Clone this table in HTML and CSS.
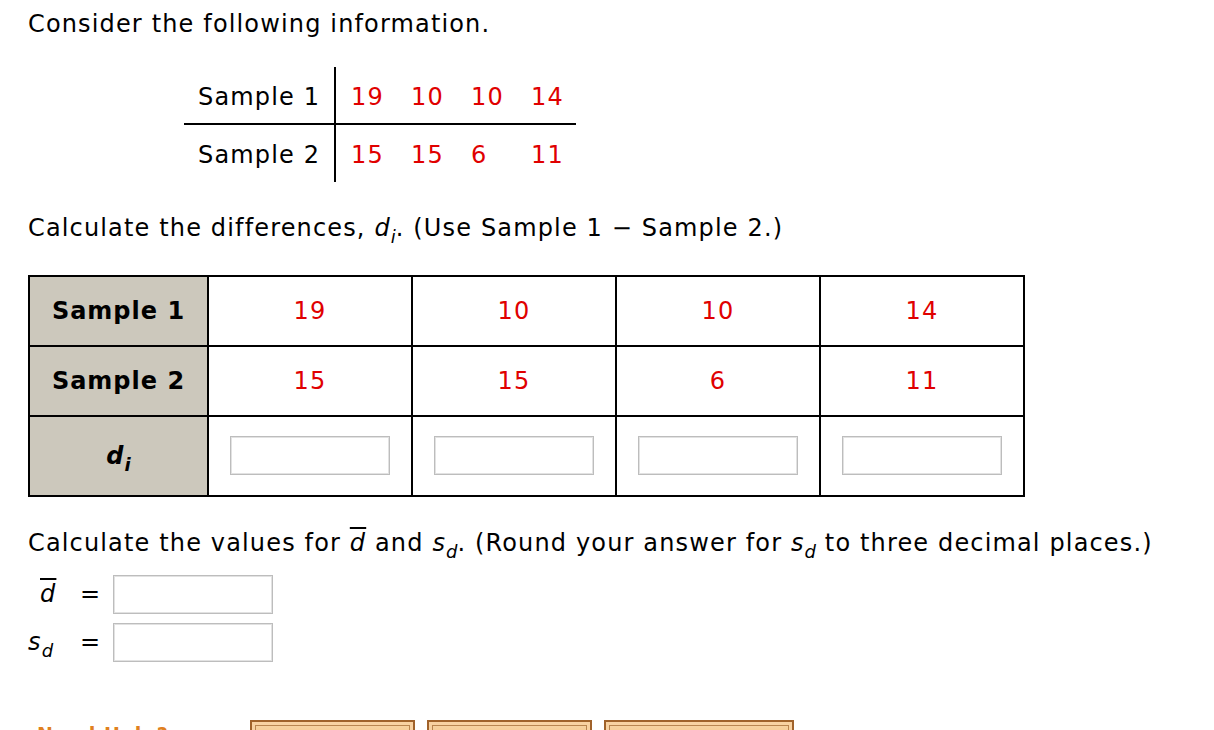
FILE: index.html
```html
<!DOCTYPE html>
<html>
<head>
<meta charset="utf-8">
<link rel="stylesheet" href="styles.css">
</head>
<body>
<div class="page">
  <p class="intro">Consider the following information.</p>

  <table class="info">
    <tr class="r1">
      <th>Sample 1</th>
      <td><span class="n">19</span><span class="n">10</span><span class="n">10</span><span class="n">14</span></td>
    </tr>
    <tr class="r2">
      <th>Sample 2</th>
      <td><span class="n">15</span><span class="n">15</span><span class="n">6</span><span class="n">11</span></td>
    </tr>
  </table>

  <p class="q1">Calculate the differences, <i>d</i><sub class="sub"><i>i</i></sub>. (Use Sample 1 − Sample 2.)</p>

  <table class="grid">
    <colgroup><col class="c0"><col class="c"><col class="c"><col class="c"><col class="c"></colgroup>
    <tr class="row">
      <th>Sample 1</th>
      <td class="red">19</td><td class="red">10</td><td class="red">10</td><td class="red">14</td>
    </tr>
    <tr class="row">
      <th>Sample 2</th>
      <td class="red">15</td><td class="red">15</td><td class="red">6</td><td class="red">11</td>
    </tr>
    <tr class="row last">
      <th><i>d</i><sub class="sub"><i>i</i></sub></th>
      <td><span class="box"></span></td><td><span class="box"></span></td><td><span class="box"></span></td><td><span class="box"></span></td>
    </tr>
  </table>

  <p class="q2">Calculate the values for <i class="bar">d</i> and <i>s</i><sub class="sub"><i>d</i></sub>. (Round your answer for <i>s</i><sub class="sub"><i>d</i></sub> to three decimal places.)</p>

  <div class="ans">
    <div class="arow"><span class="lbl"><i class="bar">d</i></span><span class="eq">=</span><span class="box"></span></div>
    <div class="arow"><span class="lbl"><i>s</i><sub class="sub"><i>d</i></sub></span><span class="eq">=</span><span class="box"></span></div>
  </div>

  <div class="help">
    <span class="helptxt">Need Help?</span>
    <span class="btn w1"></span><span class="btn w2"></span><span class="btn w3"></span>
  </div>
</div>
</body>
</html>
```
FILE: styles.css
```css
html, body { margin: 0; padding: 0; background: #fff; }
body {
  font-family: "DejaVu Sans", Verdana, sans-serif;
  font-size: 24px;
  letter-spacing: 1.15px;
  color: #000;
  overflow: hidden;
}
.page { padding: 8px 0 0 28px; }
p { margin: 0; }
.intro { line-height: 32px; }

.info { border-collapse: collapse; margin: 27px 0 0 156px; white-space: nowrap; }
.info th { font-weight: normal; text-align: left; padding: 3px 14px 0 14px; border-right: 2px solid #000; width: 120px; }
.info td { padding: 3px 0 0 15px; width: 225px; }
.info .r1 th, .info .r1 td { border-bottom: 2px solid #000; height: 53px; }
.info .r2 th, .info .r2 td { height: 55px; padding-top: 2px; }
.n { display: inline-block; width: 60px; color: #e00000; }
.n:last-child { width: 44px; }

.sub { font-size: 0.75em; vertical-align: -0.38em; line-height: 0; letter-spacing: 0; }
.q1 { margin-top: 28px; line-height: 36px; }

.grid { border-collapse: collapse; margin-top: 29px; table-layout: fixed; width: 997px; }
.grid .c0 { width: 179px; }
.grid .c { width: 204px; }
.grid th, .grid td { border: 2px solid #000; padding: 0; }
.grid th { background: #ccc8bc; font-weight: bold; text-align: center; letter-spacing: 1px; }
.grid td { text-align: center; }
.grid .row { height: 70px; }
.grid .row.last { height: 80px; }
.red { color: #e00000; }
.grid .box { margin: -2px auto 0; }

.box {
  display: block;
  width: 158px; height: 37px;
  border: 1px solid #bdbdbd;
  box-shadow: inset 0 0 0 1px #e2e2e2;
  background: #fff;
}

.q2 { margin-top: 28px; line-height: 36px; }
.bar { text-decoration: overline; text-decoration-thickness: 2px; }
.ans { margin-top: 9px; }
.arow { display: flex; align-items: center; height: 48px; }
.lbl { width: 52px; flex: none; }
.arow:first-child .lbl { padding-left: 12px; width: 40px; }
.eq { width: 33px; flex: none; }
.ans .box { display: inline-block; flex: none; }

.help { display: flex; align-items: flex-start; margin-top: 54px; height: 40px; }
.helptxt { color: #e08020; font-weight: bold; font-size: 19px; letter-spacing: 1px; width: 213px; padding-left: 9px; margin-top: 3px; flex: none; white-space: nowrap; }
.btn {
  display: inline-block; height: 30px; flex: none;
  border: 2px solid #a0622a;
  background: linear-gradient(#f8d6a8, #efb56c);
  box-shadow: inset 0 0 0 3px #f8d2a2, inset 0 0 0 4px #b98550;
}
.w1 { width: 161px; margin-right: 12px; }
.w2 { width: 161px; margin-right: 12px; }
.w3 { width: 186px; }
```
